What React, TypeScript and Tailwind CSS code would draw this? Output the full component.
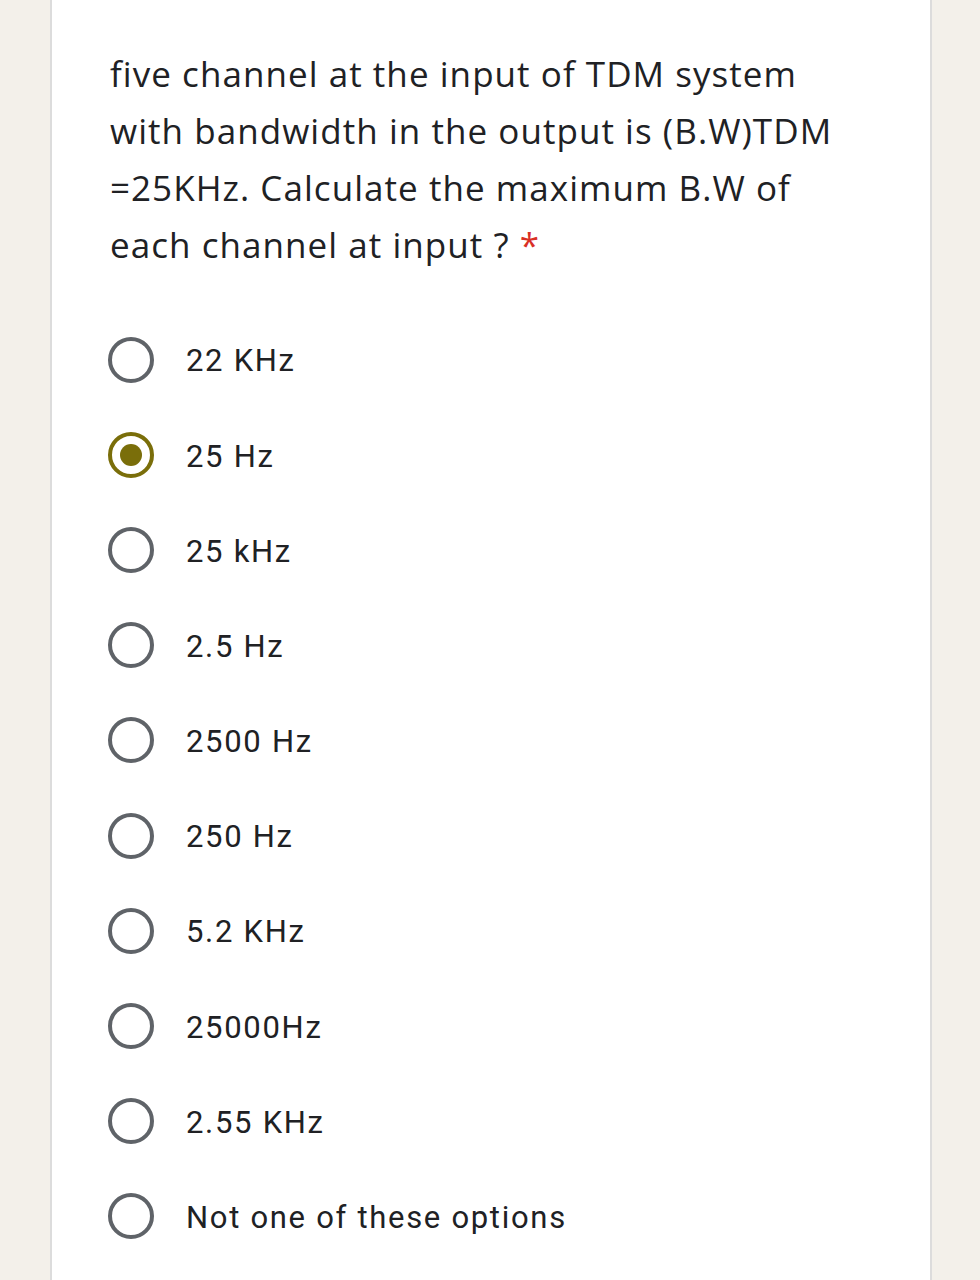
const options = [
  '22 KHz',
  '25 Hz',
  '25 kHz',
  '2.5 Hz',
  '2500 Hz',
  '250 Hz',
  '5.2 KHz',
  '25000Hz',
  '2.55 KHz',
  'Not one of these options',
];

const selected = 1;

function Radio({ checked }: { checked: boolean }) {
  if (checked) {
    return (
      <div className="w-[46px] h-[46px] rounded-full border-[4px] border-[#7a6e0a] flex items-center justify-center shrink-0">
        <div className="w-[22px] h-[22px] rounded-full bg-[#7a6e0a]" />
      </div>
    );
  }
  return <div className="w-[46px] h-[46px] rounded-full border-[4px] border-[#5f6368] shrink-0" />;
}

export default function App() {
  return (
    <div className="min-h-[1280px] bg-[#f3f0ea] flex" style={{ fontFamily: 'Roboto, "Noto Sans", sans-serif' }}>
      <div className="ml-[50px] w-[882px] bg-white border-x-2 border-[#dcdcdc] min-h-[1280px]">
        <div
          className="pt-[45px] pl-[58px] pr-[20px] text-[35px] leading-[57px] tracking-[1.05px] text-[#202124] whitespace-nowrap"
          style={{ fontFamily: '"Open Sans", Roboto, sans-serif' }}
        >
          five channel at the input of TDM system
          <br />
          with bandwidth in the output is (B.W)TDM
          <br />
          =25KHz. Calculate the maximum B.W of
          <br />
          each channel at input ? <span className="text-[#d93025]">*</span>
        </div>
        <div className="mt-[39px] pl-[56px]">
          {options.map((o, i) => (
            <div key={o} className="h-[95.2px] flex items-center gap-[32px]">
              <Radio checked={i === selected} />
              <span className="text-[31px] tracking-[1.7px] text-[#202124] pt-[4px]">{o}</span>
            </div>
          ))}
        </div>
      </div>
    </div>
  );
}
